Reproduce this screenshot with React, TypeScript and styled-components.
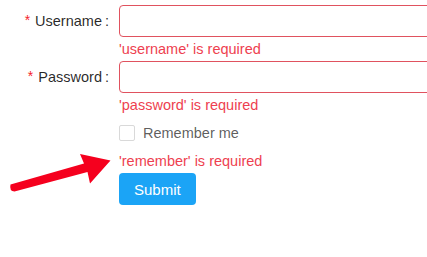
import React from "react";
import styled, { createGlobalStyle } from "styled-components";

const GlobalStyle = createGlobalStyle`
  html, body {
    margin: 0;
    padding: 0;
    background: #fff;
    overflow: hidden;
  }
  body {
    font-family: "Liberation Sans", Arial, sans-serif;
    font-size: 14px;
  }
`;

const fields = [
  { name: "username", label: "Username" },
  { name: "password", label: "Password" },
];

const App: any = () => {
  return (
    <Page>
      <GlobalStyle />
      <Form onSubmit={(e) => e.preventDefault()}>
        {fields.map((f) => (
          <Item key={f.name}>
            <Label htmlFor={f.name}>
              <Star>*</Star>
              {f.label}
              <Colon>:</Colon>
            </Label>
            <Control>
              <Input id={f.name} type={f.name === "password" ? "password" : "text"} />
              <Explain>'{f.name}' is required</Explain>
            </Control>
          </Item>
        ))}
        <Item>
          <span />
          <Control>
            <CheckRow>
              <Box type="checkbox" />
              <CheckText>Remember me</CheckText>
            </CheckRow>
            <Explain>'remember' is required</Explain>
            <Button type="submit">Submit</Button>
          </Control>
        </Item>
      </Form>
      <Arrow viewBox="0 0 427 257" width="427" height="257">
        <path
          d="M10.5 184.5 L84 163.5 L80 154 L110.5 160.5 L90 183.5 L87.5 172 L14.5 191.5 Q9 191 10.5 184.5 Z"
          fill="#f5001e"
        />
      </Arrow>
    </Page>
  );
};

const Page = styled.div`
  position: relative;
  width: 427px;
  height: 257px;
  padding-top: 5px;
  box-sizing: border-box;
  overflow: hidden;
`;

const Form = styled.form`
  display: flex;
  flex-direction: column;
`;

const Item = styled.div`
  display: grid;
  grid-template-columns: 119px 320px;
  align-items: start;
`;

const Label = styled.label`
  height: 32px;
  display: flex;
  align-items: center;
  justify-content: flex-end;
  color: rgba(0, 0, 0, 0.85);
  font-size: 14.5px;
`;

const Star = styled.span`
  color: #f5222d;
  margin-right: 5px;
  font-size: 14px;
  position: relative;
  top: -1px;
`;

const Colon = styled.span`
  margin: 0 10px 0 3px;
`;

const Control = styled.div`
  display: flex;
  flex-direction: column;
  align-items: flex-start;
`;

const Input = styled.input`
  width: 320px;
  height: 32px;
  box-sizing: border-box;
  border: 1px solid #e0525f;
  border-radius: 4px;
  padding: 4px 11px;
  font-size: 14px;
  outline: none;
`;

const Explain = styled.div`
  height: 24px;
  line-height: 24px;
  color: #ee3f50;
  font-size: 14.5px;
`;

const CheckRow = styled.label`
  height: 32px;
  display: flex;
  align-items: center;
`;

const Box = styled.input`
  appearance: none;
  margin: 0;
  width: 16px;
  height: 16px;
  border: 1px solid #d9d9d9;
  border-radius: 2px;
  background: #fff;
  box-sizing: border-box;
`;

const CheckText = styled.span`
  margin-left: 8px;
  color: rgba(0, 0, 0, 0.65);
  font-size: 14.5px;
`;

const Button = styled.button`
  height: 32px;
  padding: 0 15px;
  border: none;
  border-radius: 4px;
  background: #1ba4f6;
  color: #fff;
  font-family: "Liberation Sans", Arial, sans-serif;
  font-size: 15px;
`;

const Arrow = styled.svg`
  position: absolute;
  left: 0;
  top: 0;
  pointer-events: none;
`;

export default App;
